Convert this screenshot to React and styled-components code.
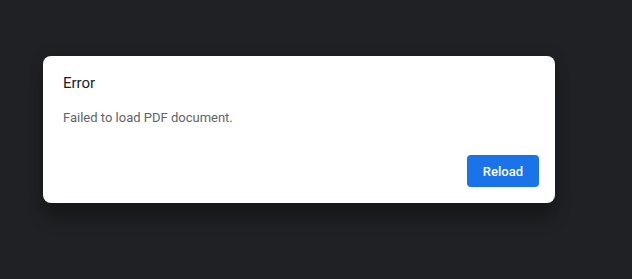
import React from 'react';
import styled, { createGlobalStyle } from 'styled-components';

const GlobalStyle = createGlobalStyle`
  html, body {
    margin: 0;
    padding: 0;
    background: #202124;
    font-family: Roboto, "Liberation Sans", sans-serif;
  }
`;

const Page = styled.div`
  width: 632px;
  height: 279px;
  padding: 56px 0 0 43px;
  box-sizing: border-box;
`;

const Dialog = styled.div`
  width: 512px;
  height: 147px;
  box-sizing: border-box;
  background: #ffffff;
  border-radius: 8px;
  box-shadow: 0 0 16px rgba(0, 0, 0, 0.12), 0 16px 16px rgba(0, 0, 0, 0.24);
  display: flex;
  flex-direction: column;
  padding: 18px 16px 16px 20px;
`;

const Title = styled.div`
  font-size: 15px;
  line-height: 18px;
  color: #202124;
`;

const Body = styled.div`
  margin-top: 18px;
  font-size: 13px;
  line-height: 16px;
  color: #5f6368;
`;

const Actions = styled.div`
  margin-top: auto;
  display: flex;
  justify-content: flex-end;
`;

const Button = styled.button`
  height: 32px;
  padding: 0 16px;
  min-width: 72px;
  border: none;
  border-radius: 4px;
  background: ${props => (props.primary ? '#1a73e8' : 'transparent')};
  color: ${props => (props.primary ? '#ffffff' : '#1a73e8')};
  font-family: Roboto, "Liberation Sans", sans-serif;
  font-size: 13px;
  font-weight: 500;
  cursor: pointer;
`;

const App = () => {
  return (
    <>
      <GlobalStyle />
      <Page>
        <Dialog>
          <Title>Error</Title>
          <Body>Failed to load PDF document.</Body>
          <Actions>
            <Button primary>Reload</Button>
          </Actions>
        </Dialog>
      </Page>
    </>
  );
};

export default App;
